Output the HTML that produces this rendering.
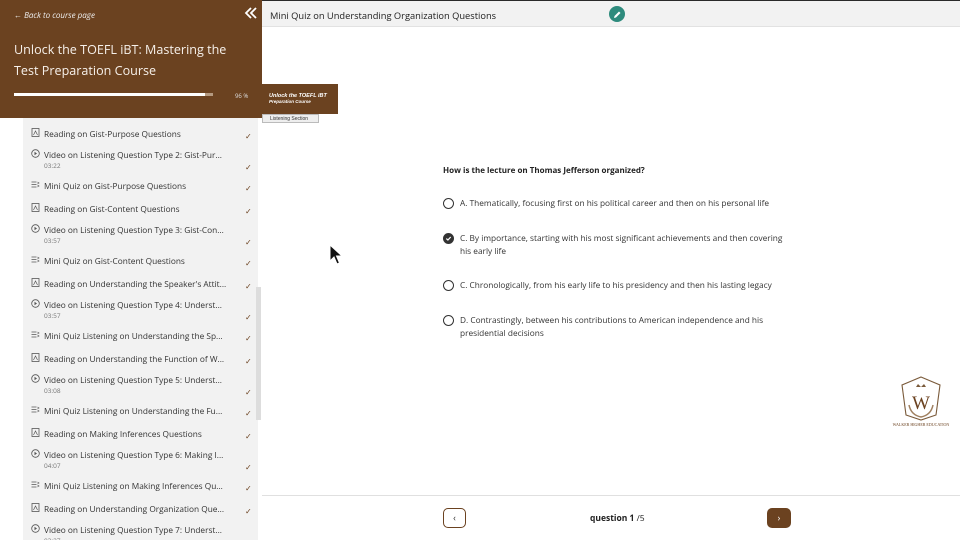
<!DOCTYPE html>
<html><head><style>
*{margin:0;padding:0;box-sizing:border-box}
body{width:960px;height:540px;overflow:hidden;background:#fff;font-family:"Open Sans","Liberation Sans",sans-serif;position:relative;color:#333}
.top{position:absolute;left:0;top:0;width:960px;height:2px;background:#2a2a2a}
.hdr{position:absolute;left:262px;top:1px;width:698px;height:26px;background:#f2f2f2;border-bottom:1px solid #e2e2e2;font-size:9.3px;color:#222;padding:8px 0 0 8px}
.pen{position:absolute;left:609px;top:6px;width:16px;height:16px;border-radius:50%;background:#2e8b7d}
.side{position:absolute;left:0;top:0;width:262px;height:118px;background:#6b4220;color:#fff}
.back{position:absolute;left:14px;top:10px;font-size:8px;font-style:italic;color:#eee}
.title{position:absolute;left:14px;top:39px;font-size:12.6px;line-height:21px;color:#f6f0ea}
.bar{position:absolute;left:14px;top:93px;width:199px;height:3px;background:#b59a80}
.bar div{width:191px;height:3px;background:#fff}
.pct{position:absolute;left:235px;top:92px;font-size:6px;color:#ddd}
.chev{position:absolute;left:244px;top:6px}
.list{position:absolute;left:23px;top:118px;width:235px;height:422px;background:#f2f2f2;overflow:hidden}
.sb{position:absolute;left:256px;top:287px;width:5px;height:133px;background:#ddd}
.it{position:absolute;left:0;width:235px;font-size:8.3px;color:#333;margin-top:1px}
.it .ic{position:absolute;left:8px;top:-1px;width:9px;height:9px}
.it .t{position:absolute;left:21px;top:0;white-space:nowrap}
.it .d{position:absolute;left:21px;top:11px;font-size:6.5px;color:#777}
.it .c{position:absolute;left:222px;font-size:8px;color:#6b4220}
.thumb{position:absolute;left:262px;top:84px;width:76px;height:30px;background:#6b4220;color:#fff;font-family:"Liberation Sans",sans-serif;font-style:italic;font-weight:bold;padding:9px 0 0 7px;font-size:5.5px;line-height:6px}
.lab{position:absolute;left:262px;top:114px;width:57px;height:9px;border:1px solid #bbb;background:#eee;font-size:5px;font-family:"Liberation Sans",sans-serif;padding:1px 0 0 7px;color:#333}
.q{position:absolute;left:443px;top:165px;font-size:8px;font-weight:bold;color:#222}
.opt{position:absolute;left:443px;font-size:8.3px;color:#333;line-height:13px}
.opt .r{position:absolute;left:0;top:1px;width:11px;height:11px;border:1.3px solid #333;border-radius:50%}
.opt .r.on{background:#333}
.opt span.tx{display:block;margin-left:17px;width:332px}
.foot{position:absolute;left:262px;top:495px;width:698px;height:1px;background:#e0e0e0}
.pb{position:absolute;left:443px;top:508px;width:23px;height:20px;border:1.2px solid #6b4220;border-radius:5px;font-size:9px;text-align:center;line-height:17px;color:#333}
.nb{position:absolute;left:767px;top:508px;width:24px;height:20px;background:#6b4220;border-radius:5px;color:#fff;font-size:9px;text-align:center;line-height:20px}
.qn{position:absolute;left:590px;top:513px;font-size:8.5px;color:#222}
</style></head><body>
<div class="top"></div>
<div class="hdr">Mini Quiz on Understanding Organization Questions</div>
<div class="pen"><svg width="16" height="16" viewBox="0 0 16 16"><path d="M5 11 L5.5 9 L10 4.5 L11.5 6 L7 10.5 Z" fill="#fff"/></svg></div>
<div class="side">
<div class="back">← Back to course page</div>
<svg class="chev" width="14" height="14" viewBox="0 0 14 14"><path d="M7 2 L2 7 L7 12 M12 2 L7 7 L12 12" stroke="#fff" stroke-width="1.8" fill="none"/></svg>
<div class="title">Unlock the TOEFL iBT: Mastering the<br>Test Preparation Course</div>
<div class="bar"><div></div></div>
<div class="pct">96 %</div>
</div>
<div class="list">
<div class="it" style="top:10px"><svg class="ic" viewBox="0 0 9 9"><rect x="1" y="0.5" width="7" height="8" fill="none" stroke="#555" stroke-width=".8"/><path d="M2.5 7 L4.5 3 L6.5 7" fill="none" stroke="#555" stroke-width=".7"/></svg><span class="t">Reading on Gist-Purpose Questions</span><span class="c" style="top:2px">✓</span></div>
<div class="it" style="top:31px"><svg class="ic" viewBox="0 0 9 9"><circle cx="4.5" cy="4.5" r="3.8" fill="none" stroke="#555" stroke-width=".8"/><path d="M3.5 2.8 L6 4.5 L3.5 6.2Z" fill="#555"/></svg><span class="t">Video on Listening Question Type 2: Gist-Pur...</span><span class="d">03:22</span><span class="c" style="top:12px">✓</span></div>
<div class="it" style="top:62px"><svg class="ic" viewBox="0 0 9 9"><path d="M0.5 2h5M0.5 4.5h5M0.5 7h5M6.5 2l1.5 1-1.5 1M6.5 5l1.5 1-1.5 1" fill="none" stroke="#555" stroke-width=".7"/></svg><span class="t">Mini Quiz on Gist-Purpose Questions</span><span class="c" style="top:2px">✓</span></div>
<div class="it" style="top:85px"><svg class="ic" viewBox="0 0 9 9"><rect x="1" y="0.5" width="7" height="8" fill="none" stroke="#555" stroke-width=".8"/><path d="M2.5 7 L4.5 3 L6.5 7" fill="none" stroke="#555" stroke-width=".7"/></svg><span class="t">Reading on Gist-Content Questions</span><span class="c" style="top:2px">✓</span></div>
<div class="it" style="top:106px"><svg class="ic" viewBox="0 0 9 9"><circle cx="4.5" cy="4.5" r="3.8" fill="none" stroke="#555" stroke-width=".8"/><path d="M3.5 2.8 L6 4.5 L3.5 6.2Z" fill="#555"/></svg><span class="t">Video on Listening Question Type 3: Gist-Con...</span><span class="d">03:57</span><span class="c" style="top:12px">✓</span></div>
<div class="it" style="top:137px"><svg class="ic" viewBox="0 0 9 9"><path d="M0.5 2h5M0.5 4.5h5M0.5 7h5M6.5 2l1.5 1-1.5 1M6.5 5l1.5 1-1.5 1" fill="none" stroke="#555" stroke-width=".7"/></svg><span class="t">Mini Quiz on Gist-Content Questions</span><span class="c" style="top:2px">✓</span></div>
<div class="it" style="top:160px"><svg class="ic" viewBox="0 0 9 9"><rect x="1" y="0.5" width="7" height="8" fill="none" stroke="#555" stroke-width=".8"/><path d="M2.5 7 L4.5 3 L6.5 7" fill="none" stroke="#555" stroke-width=".7"/></svg><span class="t">Reading on Understanding the Speaker's Attit...</span><span class="c" style="top:2px">✓</span></div>
<div class="it" style="top:181px"><svg class="ic" viewBox="0 0 9 9"><circle cx="4.5" cy="4.5" r="3.8" fill="none" stroke="#555" stroke-width=".8"/><path d="M3.5 2.8 L6 4.5 L3.5 6.2Z" fill="#555"/></svg><span class="t">Video on Listening Question Type 4: Underst...</span><span class="d">03:57</span><span class="c" style="top:12px">✓</span></div>
<div class="it" style="top:212px"><svg class="ic" viewBox="0 0 9 9"><path d="M0.5 2h5M0.5 4.5h5M0.5 7h5M6.5 2l1.5 1-1.5 1M6.5 5l1.5 1-1.5 1" fill="none" stroke="#555" stroke-width=".7"/></svg><span class="t">Mini Quiz Listening on Understanding the Sp...</span><span class="c" style="top:2px">✓</span></div>
<div class="it" style="top:235px"><svg class="ic" viewBox="0 0 9 9"><rect x="1" y="0.5" width="7" height="8" fill="none" stroke="#555" stroke-width=".8"/><path d="M2.5 7 L4.5 3 L6.5 7" fill="none" stroke="#555" stroke-width=".7"/></svg><span class="t">Reading on Understanding the Function of W...</span><span class="c" style="top:2px">✓</span></div>
<div class="it" style="top:256px"><svg class="ic" viewBox="0 0 9 9"><circle cx="4.5" cy="4.5" r="3.8" fill="none" stroke="#555" stroke-width=".8"/><path d="M3.5 2.8 L6 4.5 L3.5 6.2Z" fill="#555"/></svg><span class="t">Video on Listening Question Type 5: Underst...</span><span class="d">03:08</span><span class="c" style="top:12px">✓</span></div>
<div class="it" style="top:287px"><svg class="ic" viewBox="0 0 9 9"><path d="M0.5 2h5M0.5 4.5h5M0.5 7h5M6.5 2l1.5 1-1.5 1M6.5 5l1.5 1-1.5 1" fill="none" stroke="#555" stroke-width=".7"/></svg><span class="t">Mini Quiz Listening on Understanding the Fu...</span><span class="c" style="top:2px">✓</span></div>
<div class="it" style="top:310px"><svg class="ic" viewBox="0 0 9 9"><rect x="1" y="0.5" width="7" height="8" fill="none" stroke="#555" stroke-width=".8"/><path d="M2.5 7 L4.5 3 L6.5 7" fill="none" stroke="#555" stroke-width=".7"/></svg><span class="t">Reading on Making Inferences Questions</span><span class="c" style="top:2px">✓</span></div>
<div class="it" style="top:331px"><svg class="ic" viewBox="0 0 9 9"><circle cx="4.5" cy="4.5" r="3.8" fill="none" stroke="#555" stroke-width=".8"/><path d="M3.5 2.8 L6 4.5 L3.5 6.2Z" fill="#555"/></svg><span class="t">Video on Listening Question Type 6: Making I...</span><span class="d">04:07</span><span class="c" style="top:12px">✓</span></div>
<div class="it" style="top:362px"><svg class="ic" viewBox="0 0 9 9"><path d="M0.5 2h5M0.5 4.5h5M0.5 7h5M6.5 2l1.5 1-1.5 1M6.5 5l1.5 1-1.5 1" fill="none" stroke="#555" stroke-width=".7"/></svg><span class="t">Mini Quiz Listening on Making Inferences Qu...</span><span class="c" style="top:2px">✓</span></div>
<div class="it" style="top:385px"><svg class="ic" viewBox="0 0 9 9"><rect x="1" y="0.5" width="7" height="8" fill="none" stroke="#555" stroke-width=".8"/><path d="M2.5 7 L4.5 3 L6.5 7" fill="none" stroke="#555" stroke-width=".7"/></svg><span class="t">Reading on Understanding Organization Que...</span><span class="c" style="top:2px">✓</span></div>
<div class="it" style="top:406px"><svg class="ic" viewBox="0 0 9 9"><circle cx="4.5" cy="4.5" r="3.8" fill="none" stroke="#555" stroke-width=".8"/><path d="M3.5 2.8 L6 4.5 L3.5 6.2Z" fill="#555"/></svg><span class="t">Video on Listening Question Type 7: Underst...</span><span class="d">03:27</span></div>
</div>
<div class="sb"></div>
<div class="thumb">Unlock the TOEFL iBT<br><span style="font-size:4.5px">Preparation Course</span></div>
<div class="lab">Listening Section</div>
<div class="q">How is the lecture on Thomas Jefferson organized?</div>
<div class="opt" style="top:197px"><span class="r"></span><span class="tx">A. Thematically, focusing first on his political career and then on his personal life</span></div>
<div class="opt" style="top:232px"><span class="r on"><svg width="9" height="9" viewBox="0 0 9 9" style="position:absolute;left:0;top:0"><path d="M2.3 4.6 L3.9 6 L6.7 3" stroke="#fff" stroke-width="1.2" fill="none"/></svg></span><span class="tx">C. By importance, starting with his most significant achievements and then covering his early life</span></div>
<div class="opt" style="top:279px"><span class="r"></span><span class="tx">C. Chronologically, from his early life to his presidency and then his lasting legacy</span></div>
<div class="opt" style="top:314px"><span class="r"></span><span class="tx">D. Contrastingly, between his contributions to American independence and his presidential decisions</span></div>
<svg style="position:absolute;left:889px;top:375px" width="64" height="54" viewBox="0 0 64 54">
<path d="M32 2 L51 10 L47 40 L32 45 L17 40 L13 10 Z" fill="none" stroke="#7a5a3a" stroke-width="1.1"/>
<path d="M27 12 L29 9 L32 12 L35 9 L37 12 Z" fill="#7a5a3a"/>
<path d="M20 30 Q22 40 32 42 Q42 40 44 30" fill="none" stroke="#a08060" stroke-width="1.5"/>
<text x="32" y="34" text-anchor="middle" font-family="Liberation Serif,serif" font-size="19" fill="#6b4220">W</text>
<text x="32" y="51" text-anchor="middle" font-family="Liberation Serif,serif" font-size="4" fill="#6b4220">WALKER HIGHER EDUCATION</text>
</svg>
<svg style="position:absolute;left:329px;top:244px" width="14" height="22" viewBox="0 0 14 22"><path d="M1 1 L1 17 L5 13 L8 20 L10.5 19 L7.5 12 L13 12 Z" fill="#111" stroke="#fff" stroke-width="1"/></svg>
<div class="foot"></div>
<div class="pb">‹</div>
<div class="qn"><b>question 1</b> /5</div>
<div class="nb">›</div>
</body></html>
